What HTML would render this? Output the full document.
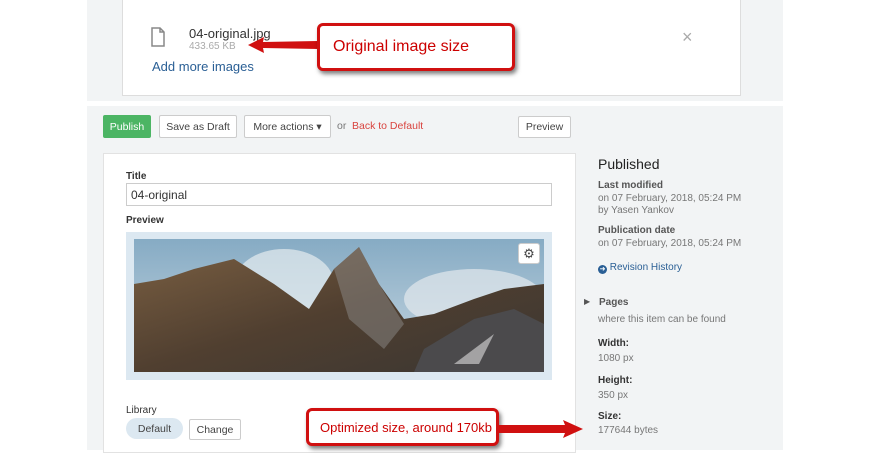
<!DOCTYPE html>
<html><head><style>
*{box-sizing:border-box;margin:0;padding:0}
body{width:870px;height:450px;background:#fff;font-family:"Liberation Sans",sans-serif;position:relative;overflow:hidden}
.gray{position:absolute;left:87px;top:0;width:696px;height:450px;background:#f2f4f5}
.abs{position:absolute;white-space:nowrap}
.btn{position:absolute;height:23px;border:1px solid #ccc;background:#fff;border-radius:2px;font-size:10.5px;color:#444;display:flex;align-items:center;justify-content:center}
.lbl{font-size:10px;color:#333;font-weight:bold}
.sm{font-size:10px;color:#777}
.callout{position:absolute;border:3px solid #d01010;border-radius:6px;background:#fff;color:#c00;box-shadow:2px 3px 4px rgba(0,0,0,.5);white-space:nowrap;display:flex;align-items:center}
</style></head><body>
<div class="gray"></div>
<div class="abs" style="left:87px;top:101px;width:696px;height:5px;background:#fff"></div>
<div class="abs" style="left:122px;top:0;width:619px;height:96px;background:#fff;border:1px solid #ddd;border-top:none"></div>
<svg class="abs" style="left:151px;top:27px" width="14" height="20"><path d="M1 1h8l4 4v14H1z M9 1v4h4" fill="none" stroke="#888" stroke-width="1.5"/></svg>
<div class="abs" style="left:189px;top:26px;font-size:13px;color:#333">04-original.jpg</div>
<div class="abs" style="left:189px;top:41px;font-size:10px;color:#aaa">433.65 KB</div>
<div class="abs" style="left:152px;top:59px;font-size:13px;color:#2a5f95">Add more images</div>
<div class="abs" style="left:682px;top:27px;font-size:18px;color:#aaa">×</div>
<svg class="abs" style="left:246px;top:36px" width="74" height="18"><path d="M2 9 L18 1 L17 6 L72 5 L72 13 L17 12 L18 17 Z" fill="#d01010"/></svg>
<div class="callout" style="left:317px;top:23px;width:198px;height:48px;font-size:16px;padding-left:13px">Original image size</div>

<div class="btn" style="left:103px;top:115px;width:48px;background:#4cb564;border-color:#4cb564;color:#fff">Publish</div>
<div class="btn" style="left:159px;top:115px;width:78px">Save as Draft</div>
<div class="btn" style="left:244px;top:115px;width:87px">More actions ▾</div>
<div class="abs" style="left:337px;top:120px;font-size:10.5px;color:#777">or</div>
<div class="abs" style="left:352px;top:120px;font-size:10.5px;color:#d9443f">Back to Default</div>
<div class="btn" style="left:518px;top:116px;width:53px;height:22px">Preview</div>

<div class="abs" style="left:103px;top:153px;width:473px;height:300px;background:#fff;border:1px solid #e2e2e2"></div>
<div class="abs lbl" style="left:126px;top:171px">Title</div>
<div class="abs" style="left:126px;top:183px;width:426px;height:23px;border:1px solid #ccc;font-size:12px;color:#333;padding:4px 4px">04-original</div>
<div class="abs lbl" style="left:126px;top:215px">Preview</div>
<div class="abs" style="left:126px;top:232px;width:426px;height:148px;background:#dce8f1"></div>
<svg class="abs" style="left:134px;top:239px" width="410" height="133" viewBox="0 0 410 133" preserveAspectRatio="none">
<defs><linearGradient id="s" x1="0" y1="0" x2="0" y2="1"><stop offset="0" stop-color="#86abc4"/><stop offset="1" stop-color="#c9d8e2"/></linearGradient>
<linearGradient id="m" x1="0" y1="0" x2="1" y2="1"><stop offset="0" stop-color="#7a5f42"/><stop offset=".5" stop-color="#503f30"/><stop offset="1" stop-color="#3a3632"/></linearGradient></defs>
<rect width="410" height="133" fill="url(#s)"/>
<ellipse cx="150" cy="45" rx="50" ry="35" fill="#e6ecef" opacity=".7"/>
<ellipse cx="340" cy="60" rx="70" ry="30" fill="#e2e8ec" opacity=".7"/>
<path d="M0 45 L30 40 L60 30 L100 20 L140 45 L175 70 L200 30 L225 8 L245 45 L270 80 L300 75 L340 60 L370 50 L410 45 L410 133 L0 133Z" fill="url(#m)"/>
<path d="M200 30 L225 8 L245 45 L270 85 L250 110 L215 80Z" fill="#8c8a88" opacity=".5"/>
<path d="M290 110 L340 80 L380 70 L410 85 L410 133 L280 133Z" fill="#4b4a4c"/>
<path d="M320 125 L360 95 L345 125Z" fill="#ddd" opacity=".6"/>
</svg>
<div class="abs" style="left:518px;top:243px;width:22px;height:21px;background:#fff;border:1px solid #ccc;border-radius:3px;text-align:center;font-size:13px;line-height:19px;color:#444">⚙</div>
<div class="abs" style="left:126px;top:405px;font-size:10px;color:#333">Library</div>
<div class="abs" style="left:126px;top:418px;width:57px;height:21px;border-radius:11px;background:#dce8f1;font-size:10.5px;color:#444;display:flex;align-items:center;justify-content:center">Default</div>
<div class="btn" style="left:189px;top:419px;width:52px;height:21px">Change</div>
<div class="callout" style="left:306px;top:408px;width:193px;height:38px;font-size:13px;padding-left:11px">Optimized size, around 170kb</div>
<svg class="abs" style="left:497px;top:419px" width="88" height="20"><path d="M0 6 L68 6 L66 1 L86 10 L66 19 L68 14 L0 14Z" fill="#d01010"/></svg>

<div class="abs" style="left:598px;top:156px;font-size:14px;color:#222">Published</div>
<div class="abs lbl" style="left:598px;top:180px;color:#555">Last modified</div>
<div class="abs sm" style="left:598px;top:193px">on 07 February, 2018, 05:24 PM</div>
<div class="abs sm" style="left:598px;top:205px">by Yasen Yankov</div>
<div class="abs lbl" style="left:598px;top:225px;color:#555">Publication date</div>
<div class="abs sm" style="left:598px;top:238px">on 07 February, 2018, 05:24 PM</div>
<div class="abs" style="left:598px;top:262px;font-size:10px;color:#2a5f95"><span style="display:inline-block;width:9px;height:9px;border-radius:50%;background:#2a5f95;color:#fff;font-size:7px;line-height:9px;text-align:center;vertical-align:-1px">➜</span> Revision History</div>
<div class="abs" style="left:584px;top:297px;font-size:8px;color:#555">▶</div>
<div class="abs lbl" style="left:599px;top:297px;color:#555">Pages</div>
<div class="abs sm" style="left:598px;top:314px">where this item can be found</div>
<div class="abs lbl" style="left:598px;top:338px">Width:</div>
<div class="abs sm" style="left:598px;top:353px">1080 px</div>
<div class="abs lbl" style="left:598px;top:375px">Height:</div>
<div class="abs sm" style="left:598px;top:390px">350 px</div>
<div class="abs lbl" style="left:598px;top:411px">Size:</div>
<div class="abs sm" style="left:598px;top:425px">177644 bytes</div>
</body></html>
